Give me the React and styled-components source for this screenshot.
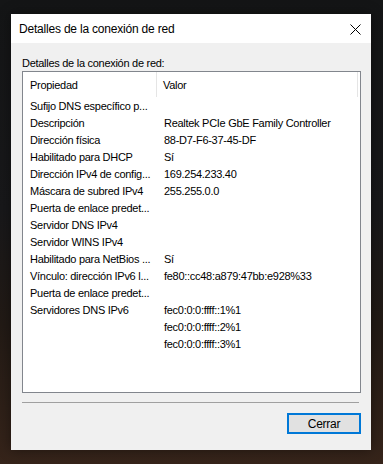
import React from 'react'
import styled, { createGlobalStyle } from 'styled-components'

const GlobalStyle = createGlobalStyle`
  html, body {
    margin: 0;
    padding: 0;
    height: 100%;
  }
  body {
    width: 383px;
    height: 464px;
    overflow: hidden;
    background: linear-gradient(180deg, #141516 0%, #18181a 45%, #221a15 70%, #36241a 100%);
    font-family: "Liberation Sans", Arial, sans-serif;
    font-size: 11px;
    letter-spacing: -0.28px;
    color: #000;
  }
`

const rows = [
  { prop: 'Sufijo DNS específico p...', val: '' },
  { prop: 'Descripción', val: 'Realtek PCIe GbE Family Controller' },
  { prop: 'Dirección física', val: '88-D7-F6-37-45-DF' },
  { prop: 'Habilitado para DHCP', val: 'Sí' },
  { prop: 'Dirección IPv4 de config...', val: '169.254.233.40' },
  { prop: 'Máscara de subred IPv4', val: '255.255.0.0' },
  { prop: 'Puerta de enlace predet...', val: '' },
  { prop: 'Servidor DNS IPv4', val: '' },
  { prop: 'Servidor WINS IPv4', val: '' },
  { prop: 'Habilitado para NetBios ...', val: 'Sí' },
  { prop: 'Vínculo: dirección IPv6 l...', val: 'fe80::cc48:a879:47bb:e928%33' },
  { prop: 'Puerta de enlace predet...', val: '' },
  { prop: 'Servidores DNS IPv6', val: 'fec0:0:0:ffff::1%1' },
  { prop: '', val: 'fec0:0:0:ffff::2%1' },
  { prop: '', val: 'fec0:0:0:ffff::3%1' },
]

export default function App() {
  return (
    <>
      <GlobalStyle />
      <Ventana>
        <BarraTitulo>
          <span>Detalles de la conexión de red</span>
          <BotonCerrarX aria-label="Cerrar">
            <svg width="11" height="11" viewBox="0 0 11 11">
              <path d="M0.5 0.5 L10.5 10.5 M10.5 0.5 L0.5 10.5" stroke="#000" strokeWidth="1" fill="none" />
            </svg>
          </BotonCerrarX>
        </BarraTitulo>
        <Cuerpo>
          <Etiqueta>Detalles de la conexión de red:</Etiqueta>
          <Lista>
            <Encabezado>
              <CeldaEnc>Propiedad</CeldaEnc>
              <CeldaEnc ancha>Valor</CeldaEnc>
            </Encabezado>
            <Filas>
              {rows.map((r, i) => (
                <Fila key={i}>
                  <Prop>{r.prop}</Prop>
                  <Val>{r.val}</Val>
                </Fila>
              ))}
            </Filas>
          </Lista>
          <Separador />
          <PieBotones>
            <Boton>Cerrar</Boton>
          </PieBotones>
        </Cuerpo>
      </Ventana>
    </>
  )
}

const Ventana = styled.div`
  margin: 14px 0 0 11px;
  width: 360px;
  height: 436px;
  background: #f0f0f0;
  display: flex;
  flex-direction: column;
  box-shadow: 0 0 12px rgba(0, 0, 0, 0.4);
`

const BarraTitulo = styled.div`
  height: 29px;
  background: #ffffff;
  display: flex;
  align-items: center;
  justify-content: space-between;
  padding: 0 10px 0 8px;
  font-size: 12px;
  letter-spacing: -0.2px;
  color: #000;
`

const BotonCerrarX = styled.div`
  width: 11px;
  height: 11px;
  display: flex;
  margin-top: 1px;
`

const Cuerpo = styled.div`
  flex: 1;
  padding: 0 10px 0 11px;
  display: flex;
  flex-direction: column;
`

const Etiqueta = styled.div`
  margin-top: 12px;
  height: 16px;
  line-height: 16px;
`

const Lista = styled.div`
  height: 320px;
  border: 1px solid #82868d;
  background: #ffffff;
  overflow: hidden;
`

const Encabezado = styled.div`
  display: flex;
  height: 25px;
  align-items: stretch;
`

const CeldaEnc = styled.div`
  width: ${p => (p.ancha ? '201px' : '134px')};
  padding-left: ${p => (p.ancha ? '6px' : '7px')};
  box-sizing: border-box;
  display: flex;
  align-items: center;
  border-right: 1px solid #e5e5e5;
`

const Filas = styled.div`
  padding-top: 1px;
  display: flex;
  flex-direction: column;
`

const Fila = styled.div`
  display: flex;
  height: 17px;
  line-height: 17px;
  white-space: nowrap;
`

const Prop = styled.div`
  width: 134px;
  padding-left: 7px;
  box-sizing: border-box;
  overflow: hidden;
`

const Val = styled.div`
  padding-left: 7px;
`

const Separador = styled.div`
  margin-top: 9px;
  height: 1px;
  width: 337px;
  background: #a0a0a0;
`

const PieBotones = styled.div`
  display: flex;
  justify-content: flex-end;
  margin-top: 10px;
`

const Boton = styled.div`
  width: 74px;
  height: 21px;
  box-sizing: border-box;
  border: 2px solid #0078d7;
  background: #e1e1e1;
  display: flex;
  align-items: center;
  justify-content: center;
  font-size: 12px;
`
